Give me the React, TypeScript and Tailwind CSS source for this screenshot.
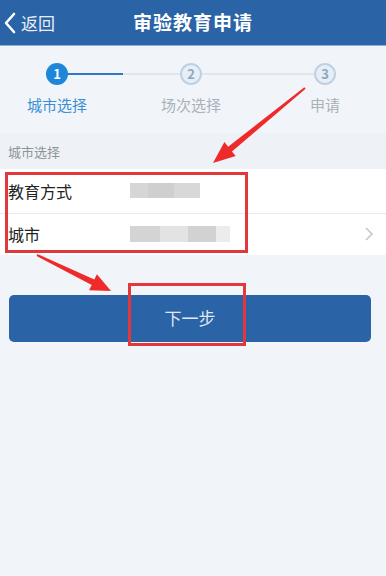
import React from "react";

const font = { fontFamily: '"Noto Sans CJK SC", "Noto Sans", sans-serif' };

function Step({ n, label, active }: { n: number; label: string; active?: boolean }) {
  return (
    <div className="flex flex-col items-center w-[70px]">
      <div
        className={
          active
            ? "w-[22px] h-[22px] rounded-full bg-[#1e86d8] text-white text-[13px] font-bold flex items-center justify-center z-10"
            : "w-[22px] h-[22px] rounded-full bg-[#e6eef7] border-2 border-[#bfd0e3] text-[#8fa6c0] text-[13px] font-bold flex items-center justify-center z-10"
        }
      >
        {n}
      </div>
      <div className={active ? "mt-[9px] text-[15px] text-[#3a8fd4]" : "mt-[9px] text-[15px] text-[#a9b1ba]"}>{label}</div>
    </div>
  );
}

export default function App() {
  return (
    <div className="relative w-[386px] h-[576px] bg-[#f1f5f9] overflow-hidden" style={font}>
      {/* Header */}
      <div className="h-[46px] bg-[#2a63a6] flex items-center relative border-b border-[#8fb0d6]">
        <div className="flex items-center pl-[3px] text-white">
          <svg width="14" height="22" viewBox="0 0 14 22">
            <path d="M11 2 L3 11 L11 20" stroke="white" strokeWidth="2.6" fill="none" strokeLinecap="round" strokeLinejoin="round" />
          </svg>
          <span className="ml-[4px] text-[17px] text-[#e8eef7]">返回</span>
        </div>
        <div className="absolute left-0 right-0 text-center text-white text-[19px] font-bold tracking-[1px] pointer-events-none">
          审验教育申请
        </div>
      </div>

      {/* Steps */}
      <div className="relative pt-[17px] pb-[14px] pl-[22px] flex gap-[64px]">
        <div className="absolute top-[27px] left-[57px] w-[269px] h-[2px] bg-[#dfe6ee]" />
        <div className="absolute top-[27px] left-[57px] w-[66px] h-[2px] bg-[#2f78c4]" />
        <Step n={1} label="城市选择" active />
        <Step n={2} label="场次选择" />
        <Step n={3} label="申请" />
      </div>

      {/* Section */}
      <div className="mt-[2px] h-[36px] flex items-end pb-[7px] pl-[8px] text-[13px] text-[#8d949c] bg-[#eef2f6]">城市选择</div>
      <div className="bg-white">
        <div className="h-[45px] flex items-center pl-[8px] border-b border-[#e8ebee]">
          <span className="w-[122px] text-[16px] text-[#222]">教育方式</span>
          <div className="flex">
            <div className="w-[18px] h-[15px] bg-[#d6d6d6]" />
            <div className="w-[26px] h-[15px] bg-[#cfcfcf]" />
            <div className="w-[26px] h-[15px] bg-[#d8d8d8]" />
          </div>
        </div>
        <div className="h-[41px] flex items-center pl-[8px] pr-[12px]">
          <span className="w-[122px] text-[16px] text-[#222]">城市</span>
          <div className="flex flex-1">
            <div className="w-[30px] h-[16px] bg-[#d4d4d4]" />
            <div className="w-[28px] h-[16px] bg-[#e3e3e3]" />
            <div className="w-[28px] h-[16px] bg-[#d2d2d2]" />
            <div className="w-[14px] h-[16px] bg-[#ececec]" />
          </div>
          <svg width="10" height="16" viewBox="0 0 10 16">
            <path d="M2 2 L8 8 L2 14" stroke="#c4c8cd" strokeWidth="1.6" fill="none" />
          </svg>
        </div>
      </div>

      {/* Button */}
      <div className="px-[9px] pt-[40px] pr-[15px]">
        <div className="h-[47px] rounded-[5px] bg-[#2a63a6] flex items-center justify-center text-[17px] text-[#dfe8f4]">下一步</div>
      </div>

      {/* Annotations */}
      <div className="absolute left-[5px] top-[172px] w-[243px] h-[81px] border-[3px] border-[#e2383b]" />
      <div className="absolute left-[128px] top-[283px] w-[118px] h-[63px] border-[3px] border-[#e2383b]" />
      <svg className="absolute left-0 top-0" width="386" height="576" viewBox="0 0 386 576">
        <polygon
          points="305.6,88.8 231.95,151.4 235.7,156.1 213,163 224.4,142.1 228.15,146.8 304.4,87.2"
          fill="#ef2a2a"
        />
        <polygon
          points="36.56,255.9 91.7,284.95 89.07,290.3 111,291 96.93,274.2 94.3,279.55 37.44,254.1"
          fill="#ef2a2a"
        />
      </svg>
    </div>
  );
}
